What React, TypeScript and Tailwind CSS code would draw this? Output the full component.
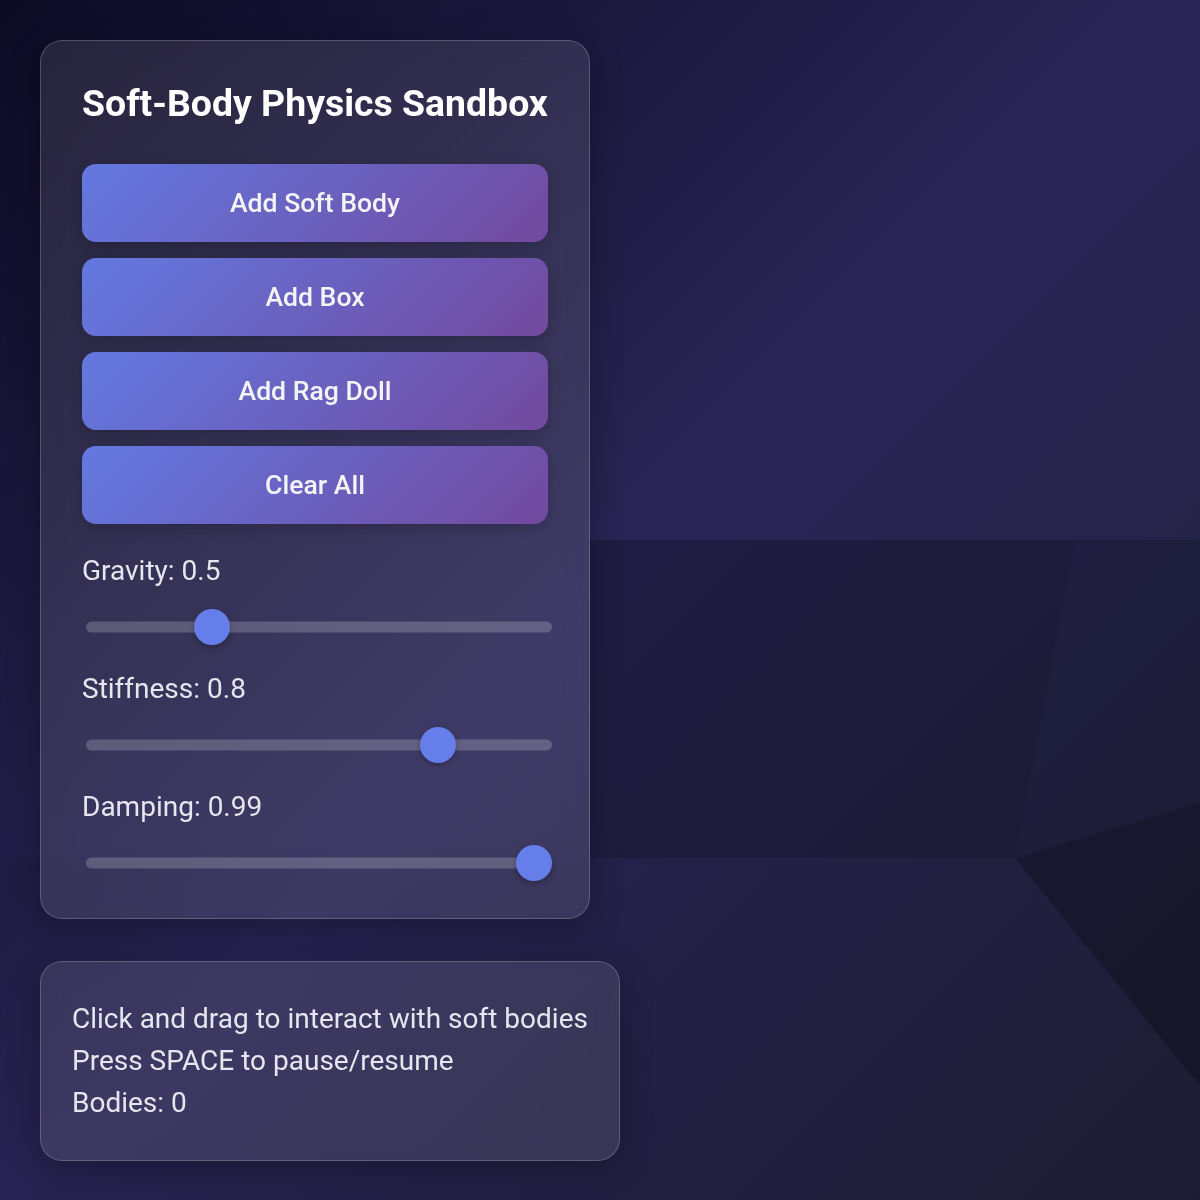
import { useState } from 'react';

type Control = {
  key: string;
  label: string;
  value: number;
  min: number;
  max: number;
};

const controls: Control[] = [
  { key: 'gravity', label: 'Gravity', value: 0.5, min: 0, max: 2 },
  { key: 'stiffness', label: 'Stiffness', value: 0.8, min: 0.1, max: 1 },
  { key: 'damping', label: 'Damping', value: 0.99, min: 0.9, max: 0.99 },
];

const buttons = ['Add Soft Body', 'Add Box', 'Add Rag Doll', 'Clear All'];

// Simple track + thumb, position computed from value
function Slider({ value, min, max }: { value: number; min: number; max: number }) {
  const pct = (value - min) / (max - min);
  return (
    <div className="relative ml-[4px] h-[36px] w-full">
      <div className="absolute left-0 right-0 top-1/2 h-[11px] -translate-y-1/2 rounded-full bg-white/20" />
      <div
        className="absolute top-0 h-[36px] w-[36px] rounded-full bg-[#667eea] shadow-[0_2px_6px_rgba(0,0,0,0.3)]"
        style={{ left: `calc(${pct} * (100% - 36px))` }}
      />
    </div>
  );
}

export default function App() {
  const [bodies] = useState(0);

  return (
    <div
      className="relative h-[1200px] w-full overflow-hidden bg-[linear-gradient(135deg,#0f0c29_0%,#302b63_50%,#24243e_100%)]"
      style={{ fontFamily: 'Roboto, "Noto Sans", sans-serif' }}
    >
      {/* canvas scenery */}
      <svg className="absolute inset-0 h-full w-full" viewBox="0 0 1200 1200" preserveAspectRatio="none">
        <rect x="0" y="0" width="1200" height="1200" fill="#000" opacity="0.12" />
        <polygon points="590,540 1075,540 1015,858 590,858" fill="#000" opacity="0.22" />
        <polygon points="0,858 1015,858 1200,1086 1200,1200 0,1200" fill="#000" opacity="0.06" />
        <polygon points="1075,540 1200,540 1200,803 1015,858" fill="#000" opacity="0.14" />
        <polygon points="1015,858 1200,803 1200,1086" fill="#000" opacity="0.3" />
      </svg>

      <div className="relative flex flex-col items-start gap-[42px] p-10">
        {/* Control panel */}
        <div className="w-[550px] rounded-[22px] border border-white/20 bg-white/10 px-[41px] pb-[37px] pt-[39px] shadow-[0_8px_32px_rgba(0,0,0,0.3)] backdrop-blur-md">
          <h1 className="mb-[38px] whitespace-nowrap text-center text-[37.4px] font-bold leading-[46px] text-white">
            Soft-Body Physics Sandbox
          </h1>

          <div className="flex flex-col gap-[16px]">
            {buttons.map((b) => (
              <button
                key={b}
                className="flex h-[78px] w-full items-center justify-center rounded-[14px] bg-[linear-gradient(135deg,#667eea_0%,#764ba2_100%)] text-[26.6px] font-medium text-white opacity-95 shadow-[0_4px_15px_rgba(0,0,0,0.2)]"
              >
                {b}
              </button>
            ))}
          </div>

          <div className="mt-[26px] flex flex-col gap-[23px]">
            {controls.map((c) => (
              <div key={c.key}>
                <div className="text-[28px] leading-[42px] text-[#e6e6ee]">
                  {c.label}: {c.value}
                </div>
                <div className="mt-[17px]">
                  <Slider value={c.value} min={c.min} max={c.max} />
                </div>
              </div>
            ))}
          </div>
        </div>

        {/* Info */}
        <div className="w-[580px] rounded-[22px] border border-white/20 bg-white/10 px-[31px] py-[36px] text-[28px] leading-[42px] text-[#e6e6ee] shadow-[0_8px_32px_rgba(0,0,0,0.3)] backdrop-blur-md">
          <div>Click and drag to interact with soft bodies</div>
          <div>Press SPACE to pause/resume</div>
          <div>Bodies: {bodies}</div>
        </div>
      </div>
    </div>
  );
}
